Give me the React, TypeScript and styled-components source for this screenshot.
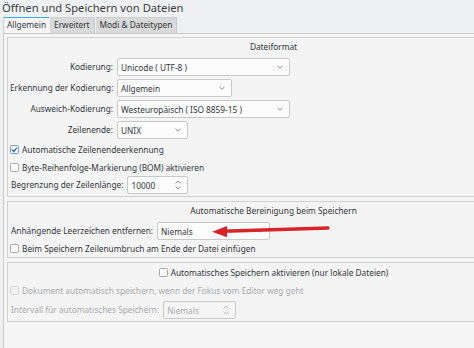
import React from "react";
import styled, { createGlobalStyle, css } from "styled-components";

const Global = createGlobalStyle`
  html, body { margin: 0; padding: 0; background: #eff0f1; }
  body { font-family: "Noto Sans", "Open Sans", sans-serif; color: #31363b; }
  * { box-sizing: border-box; }
`;

const Viewport = styled.div`
  position: relative;
  width: 474px;
  height: 348px;
  overflow: hidden;
  background: #eff0f1;
`;

const Title = styled.div`
  height: 17px;
  padding-left: 2px;
  font-size: 11.2px;
  line-height: 15px;
  color: #3a3e42;
  white-space: nowrap;
`;

const TabBar = styled.div`
  display: flex;
  gap: 1px;
  height: 16px;
  margin-left: 3px;
`;

const Tab = styled.div<{ $active?: boolean }>`
  height: 16px;
  font-size: 8.3px;
  white-space: nowrap;
  color: #31363b;
  ${(p) =>
    p.$active
      ? css`
          padding: 0 3px;
          background: #f6f6f6;
          border-top: 1.5px solid #3daee9;
          border-left: 1px solid #d0d0d0;
          line-height: 13px;
        `
      : css`
          padding: 0 4px;
          background: #d9d9d9;
          border-top: 1px solid #cfcfcf;
          border-right: 1px solid #c8c8c8;
          line-height: 14px;
        `}
`;

const Panel = styled.div`
  width: 541px;
  height: 320px;
  margin-left: 3px;
  border: 1px solid #cacaca;
  background: #f5f5f5;
  padding: 3px 3px 0 3px;
  display: flex;
  flex-direction: column;
  gap: 4px;
`;

const Group = styled.div<{ $pb?: number }>`
  border: 1px solid #d2d2d2;
  background: #f4f4f4;
  padding: 3px 2px ${(p) => p.$pb ?? 2}px 2px;
  display: flex;
  flex-direction: column;
`;

const GroupTitle = styled.div`
  text-align: center;
  font-size: 8.3px;
  line-height: 12px;
  margin-bottom: 5px;
  white-space: nowrap;
`;

const FormGrid = styled.div`
  display: grid;
  grid-template-columns: 103px auto;
  column-gap: 4px;
  row-gap: 3px;
  justify-content: start;
  margin-bottom: 1px;
`;

const Label = styled.div<{ $disabled?: boolean }>`
  font-size: 8.3px;
  line-height: 18px;
  text-align: right;
  white-space: nowrap;
  color: ${(p) => (p.$disabled ? "#a9abad" : "#31363b")};
`;

const Row = styled.div<{ $h?: number; $mt?: number; $center?: boolean; $pl?: number; $gap?: number }>`
  display: flex;
  align-items: center;
  gap: ${(p) => p.$gap ?? 4}px;
  height: ${(p) => p.$h ?? 18}px;
  margin-top: ${(p) => p.$mt ?? 0}px;
  padding-left: ${(p) => p.$pl ?? 0}px;
  justify-content: ${(p) => (p.$center ? "center" : "flex-start")};
`;

const FieldBox = styled.div<{ $w: number; $disabled?: boolean }>`
  position: relative;
  width: ${(p) => p.$w}px;
  height: 18px;
  border: 1px solid #c9c9c9;
  border-radius: 2px;
  background: ${(p) => (p.$disabled ? "#f5f5f5" : "#fcfcfc")};
  display: flex;
  align-items: center;
  padding-left: 3px;
  font-size: 8.3px;
  color: ${(p) => (p.$disabled ? "#a9abad" : "#31363b")};
  white-space: nowrap;
`;

const Indicator = styled.span`
  margin-left: auto;
  margin-right: 6px;
  display: flex;
  align-items: center;
`;

const CheckText = styled.span<{ $disabled?: boolean }>`
  font-size: 8.3px;
  white-space: nowrap;
  color: ${(p) => (p.$disabled ? "#a9abad" : "#31363b")};
`;

const Box = styled.span<{ $checked?: boolean; $disabled?: boolean }>`
  width: 9px;
  height: 9px;
  border: 1px solid ${(p) => (p.$checked ? "#6d9fd0" : p.$disabled ? "#d5d5d5" : "#a7a9ab")};
  border-radius: 1.5px;
  background: ${(p) => (p.$disabled ? "#f0f0f0" : "#fcfcfc")};
  display: inline-flex;
  align-items: center;
  justify-content: center;
`;

const ArrowOverlay = styled.svg`
  position: absolute;
  left: 205px;
  top: 218px;
`;

const Chevron = ({ color = "#7a7c7e" }: { color?: string }) => (
  <svg width="6" height="4" viewBox="0 0 6 4">
    <path d="M0.5 0.8 L3 3.2 L5.5 0.8" fill="none" stroke={color} strokeWidth="0.9" />
  </svg>
);

const SpinArrows = ({ color = "#7a7c7e" }: { color?: string }) => (
  <svg width="6" height="10" viewBox="0 0 6 10">
    <path d="M0.5 3.5 L3 1 L5.5 3.5" fill="none" stroke={color} strokeWidth="0.9" />
    <path d="M0.5 6.5 L3 9 L5.5 6.5" fill="none" stroke={color} strokeWidth="0.9" />
  </svg>
);

const Combo = ({ w, text, disabled }: { w: number; text: string; disabled?: boolean }) => (
  <FieldBox $w={w} $disabled={disabled}>
    {text}
    <Indicator>
      <Chevron />
    </Indicator>
  </FieldBox>
);

const Spin = ({ w, text, disabled }: { w: number; text: string; disabled?: boolean }) => (
  <FieldBox $w={w} $disabled={disabled}>
    {text}
    <Indicator>
      <SpinArrows color={disabled ? "#b5b7b9" : "#7a7c7e"} />
    </Indicator>
  </FieldBox>
);

const Check = ({ label, checked, disabled }: { label: string; checked?: boolean; disabled?: boolean }) => (
  <>
    <Box $checked={checked} $disabled={disabled}>
      {checked && (
        <svg width="7" height="7" viewBox="0 0 7 7">
          <path d="M1 3.6 L2.8 5.4 L6 1.6" fill="none" stroke="#2e6aa8" strokeWidth="1.4" />
        </svg>
      )}
    </Box>
    <CheckText $disabled={disabled}>{label}</CheckText>
  </>
);

export default function App() {
  return (
    <Viewport>
      <Global />
      <Title>Öffnen und Speichern von Dateien</Title>
      <TabBar>
        <Tab $active>Allgemein</Tab>
        <Tab>Erweitert</Tab>
        <Tab>Modi &amp; Dateitypen</Tab>
      </TabBar>
      <Panel>
        <Group>
          <GroupTitle>Dateiformat</GroupTitle>
          <FormGrid>
            <Label>Kodierung:</Label>
            <Combo w={173} text="Unicode ( UTF-8 )" />
            <Label>Erkennung der Kodierung:</Label>
            <Combo w={115} text="Allgemein" />
            <Label>Ausweich-Kodierung:</Label>
            <Combo w={173} text="Westeuropäisch ( ISO 8859-15 )" />
            <Label>Zeilenende:</Label>
            <Combo w={71} text="UNIX" />
          </FormGrid>
          <Row $gap={3}>
            <Check label="Automatische Zeilenendeerkennung" checked />
          </Row>
          <Row $gap={3}>
            <Check label="Byte-Reihenfolge-Markierung (BOM) aktivieren" />
          </Row>
          <Row $pl={1}>
            <Label>Begrenzung der Zeilenlänge:</Label>
            <Spin w={61} text="10000" />
          </Row>
        </Group>
        <Group $pb={0}>
          <GroupTitle>Automatische Bereinigung beim Speichern</GroupTitle>
          <Row $pl={1}>
            <Label>Anhängende Leerzeichen entfernen:</Label>
            <Combo w={113} text="Niemals" />
          </Row>
          <Row $h={17} $gap={3}>
            <Check label="Beim Speichern Zeilenumbruch am Ende der Datei einfügen" />
          </Row>
        </Group>
        <Group $pb={2}>
          <Row $h={12} $center $gap={3}>
            <Check label="Automatisches Speichern aktivieren (nur lokale Dateien)" />
          </Row>
          <Row $mt={3} $gap={3}>
            <Check label="Dokument automatisch speichern, wenn der Fokus vom Editor weg geht" disabled />
          </Row>
          <Row $mt={2} $pl={1}>
            <Label $disabled>Intervall für automatisches Speichern:</Label>
            <Spin w={73} text="Niemals" disabled />
          </Row>
        </Group>
      </Panel>
      <ArrowOverlay width="130" height="22" viewBox="0 0 130 22">
        <path d="M18 13.2 L123 10" stroke="#d8232a" strokeWidth="3.4" strokeLinecap="round" fill="none" />
        <polygon points="7,13.8 22,8 22,19.2" fill="#d8232a" />
      </ArrowOverlay>
    </Viewport>
  );
}
